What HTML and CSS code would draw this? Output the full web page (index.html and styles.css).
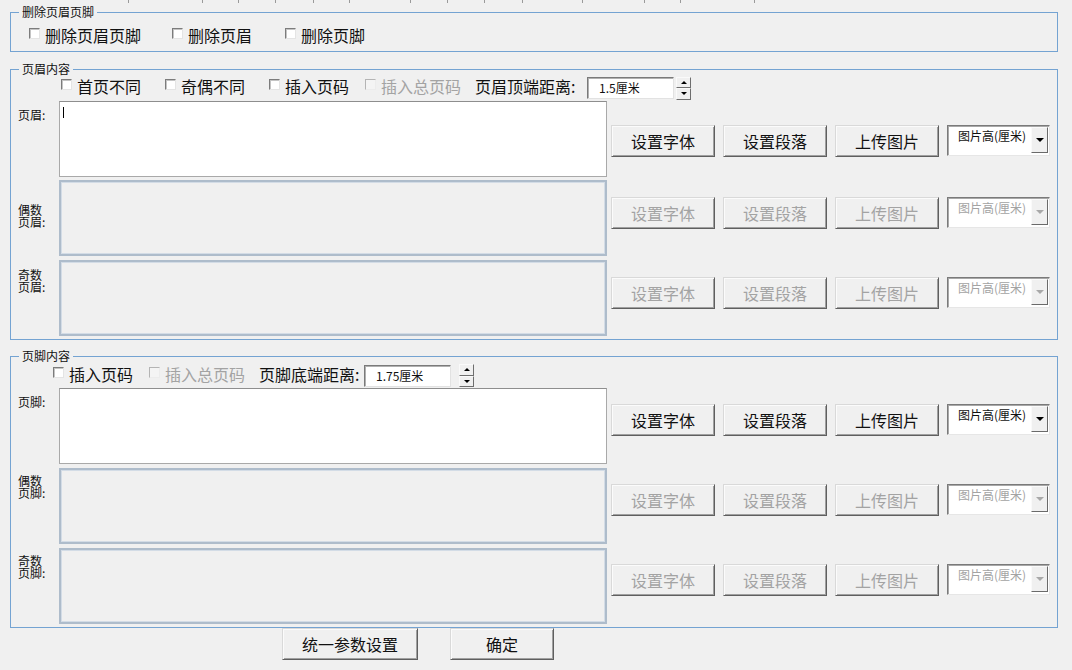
FILE: index.html
```html
<!DOCTYPE html>
<html lang="zh-CN">
<head>
<meta charset="utf-8">
<title>页眉页脚设置</title>
<link rel="stylesheet" href="styles.css">
</head>
<body>
<div class="ticks"><span></span><span></span><span></span><span></span><span></span><span></span><span></span><span></span><span></span><span></span><span></span><span></span><span></span><span></span></div>

<fieldset class="group g-delete">
  <legend>删除页眉页脚</legend>
  <div class="cb-row">
    <label class="cb"><span class="box"></span>删除页眉页脚</label>
    <label class="cb ml31"><span class="box"></span>删除页眉</label>
    <label class="cb ml33"><span class="box"></span>删除页脚</label>
  </div>
</fieldset>

<fieldset class="group g-header">
  <legend>页眉内容</legend>
  <div class="opt-row opt-header">
    <label class="cb"><span class="box"></span>首页不同</label>
    <label class="cb ml24"><span class="box"></span>奇偶不同</label>
    <label class="cb ml24"><span class="box"></span>插入页码</label>
    <label class="cb ml16 disabled"><span class="box"></span>插入总页码</label>
    <span class="dist-label ml14 w112">页眉顶端距离:</span>
    <div class="num-input">1.5厘米</div>
    <div class="spin ml2"><span class="up"></span><span class="down"></span></div>
  </div>

  <div class="editor-row">
    <div class="row-label pt7">页眉:</div>
    <div class="editor"><span class="caret"></span></div>
    <div class="tools pt24">
      <button class="btn">设置字体</button>
      <button class="btn">设置段落</button>
      <button class="btn">上传图片</button>
      <div class="combo"><span class="combo-text">图片高(厘米)</span><span class="combo-btn"></span></div>
    </div>
  </div>
  <div class="editor-row mt3">
    <div class="row-label two pt25">偶数<br>页眉:</div>
    <div class="editor off"></div>
    <div class="tools pt17">
      <button class="btn" disabled>设置字体</button>
      <button class="btn" disabled>设置段落</button>
      <button class="btn" disabled>上传图片</button>
      <div class="combo off"><span class="combo-text">图片高(厘米)</span><span class="combo-btn"></span></div>
    </div>
  </div>
  <div class="editor-row mt4">
    <div class="row-label two pt10">奇数<br>页眉:</div>
    <div class="editor off"></div>
    <div class="tools pt17">
      <button class="btn" disabled>设置字体</button>
      <button class="btn" disabled>设置段落</button>
      <button class="btn" disabled>上传图片</button>
      <div class="combo off"><span class="combo-text">图片高(厘米)</span><span class="combo-btn"></span></div>
    </div>
  </div>
</fieldset>

<fieldset class="group g-footer">
  <legend>页脚内容</legend>
  <div class="opt-row opt-footer">
    <label class="cb"><span class="box"></span>插入页码</label>
    <label class="cb ml16 disabled"><span class="box"></span>插入总页码</label>
    <span class="dist-label ml14 w105">页脚底端距离:</span>
    <div class="num-input">1.75厘米</div>
    <div class="spin ml8"><span class="up"></span><span class="down"></span></div>
  </div>

  <div class="editor-row">
    <div class="row-label pt7">页脚:</div>
    <div class="editor"></div>
    <div class="tools pt16">
      <button class="btn">设置字体</button>
      <button class="btn">设置段落</button>
      <button class="btn">上传图片</button>
      <div class="combo"><span class="combo-text">图片高(厘米)</span><span class="combo-btn"></span></div>
    </div>
  </div>
  <div class="editor-row mt4">
    <div class="row-label two pt8">偶数<br>页脚:</div>
    <div class="editor off"></div>
    <div class="tools pt16">
      <button class="btn" disabled>设置字体</button>
      <button class="btn" disabled>设置段落</button>
      <button class="btn" disabled>上传图片</button>
      <div class="combo off"><span class="combo-text">图片高(厘米)</span><span class="combo-btn"></span></div>
    </div>
  </div>
  <div class="editor-row mt4">
    <div class="row-label two pt8">奇数<br>页脚:</div>
    <div class="editor off"></div>
    <div class="tools pt16">
      <button class="btn" disabled>设置字体</button>
      <button class="btn" disabled>设置段落</button>
      <button class="btn" disabled>上传图片</button>
      <div class="combo off"><span class="combo-text">图片高(厘米)</span><span class="combo-btn"></span></div>
    </div>
  </div>
</fieldset>

<div class="bottom-bar">
  <button class="btn wide">统一参数设置</button>
  <button class="btn">确定</button>
</div>
</body>
</html>
```

FILE: styles.css
```css
* { box-sizing: border-box; }
html, body { margin: 0; padding: 0; }
body {
  width: 1072px;
  height: 670px;
  overflow: hidden;
  background: #f0f0f0;
  color: #111;
  font-family: "Noto Sans CJK SC", "Microsoft YaHei", sans-serif;
}

/* cut-off marks of the content above */
.ticks {
  display: grid;
  grid-template-columns: 74px 36px 37px 38px 36px 61px 37px 37px 38px 60px 62px 36px 74px 1px;
  padding-left: 128px;
  height: 5px;
}
.ticks span { border-left: 1px solid #9a9a9a; height: 3px; }

/* group boxes */
.group {
  margin: 0 0 0 10px;
  width: 1048px;
  min-width: 0;
  padding: 0;
  border: 1px solid #74a3d2;
}
.group legend {
  margin-left: 8px;
  padding: 0 3px;
  font-size: 12px;
  line-height: 14px;
  height: 14px;
}
.g-header { margin-top: 10px; padding-bottom: 3px; }
.g-footer { margin-top: 9px; padding-bottom: 3px; }

/* checkbox rows */
.cb-row {
  display: flex;
  align-items: center;
  height: 18px;
  margin: 7px 0 7px;
  padding-left: 18px;
}
.cb {
  display: flex;
  align-items: center;
  font-size: 16px;
  line-height: 18px;
  white-space: nowrap;
}
.box {
  width: 11px;
  height: 11px;
  margin-right: 5px;
  margin-bottom: 3px;
  background: #fff;
  border: 1px solid;
  border-color: #7c7c7c #e4e4e4 #e4e4e4 #7c7c7c;
  box-shadow: inset 1px 1px 0 #c4c4c4;
}
.cb.disabled { color: #a3a3a3; }
.cb.disabled .box {
  background: #f4f4f4;
  border-color: #b4b4b4 #ececec #ececec #b4b4b4;
  box-shadow: none;
}

.ml2 { margin-left: 2px; }
.ml8 { margin-left: 8px; }
.ml14 { margin-left: 14px; }
.ml16 { margin-left: 16px; }
.ml24 { margin-left: 24px; }
.ml31 { margin-left: 31px; }
.ml33 { margin-left: 33px; }

.opt-row {
  display: flex;
  align-items: center;
  height: 24px;
}
.opt-row .cb,
.opt-row .dist-label { margin-bottom: 5px; }
.opt-header { padding-left: 50px; margin-bottom: 1px; }
.opt-footer { padding-left: 42px; height: 25px; }
.opt-footer .cb,
.opt-footer .dist-label { margin-bottom: 3px; }

.dist-label {
  font-size: 16px;
  line-height: 18px;
  white-space: nowrap;
}
.w112 { width: 112px; }
.w105 { width: 105px; }

.num-input {
  width: 87px;
  height: 22px;
  background: #fff;
  border: 1px solid;
  border-color: #7a7a7a #e2e2e2 #e2e2e2 #7a7a7a;
  box-shadow: inset 1px 1px 0 #b0b0b0;
  font-size: 12px;
  line-height: 19px;
  padding-left: 11px;
  white-space: nowrap;
}

.spin {
  display: flex;
  flex-direction: column;
  width: 15px;
  height: 23px;
}
.spin span {
  flex: 1;
  display: flex;
  align-items: center;
  justify-content: center;
  background: #f0f0f0;
  border: 1px solid;
  border-color: #fafafa #6e6e6e #6e6e6e #fafafa;
}
.spin .up::before {
  content: "";
  border-left: 3px solid transparent;
  border-right: 3px solid transparent;
  border-bottom: 3px solid #000;
}
.spin .down::before {
  content: "";
  border-left: 3px solid transparent;
  border-right: 3px solid transparent;
  border-top: 3px solid #000;
}

/* editor rows */
.editor-row {
  display: flex;
  height: 76px;
}
.mt3 { margin-top: 3px; }
.mt4 { margin-top: 4px; }

.row-label {
  width: 48px;
  padding-left: 7px;
  font-size: 12px;
  line-height: 14px;
  white-space: nowrap;
}
.row-label.two { line-height: 12px; }
.pt7 { padding-top: 7px; }
.pt8 { padding-top: 7px; }
.pt10 { padding-top: 9px; }
.pt25 { padding-top: 24px; }

.editor {
  width: 548px;
  height: 76px;
  background: #fff;
  border: 1px solid #a9a9a9;
  border-top-color: #8e8e8e;
  padding: 5px 0 0 3px;
}
.caret {
  display: block;
  width: 1px;
  height: 11px;
  background: #000;
}
.editor.off {
  background: #f0f0f0;
  border: 2px solid #aebccb;
  box-shadow: inset 0 0 0 1px #d3dce6;
}

.tools {
  display: flex;
  align-items: flex-start;
  gap: 8px;
  margin-left: 4px;
}
.pt16 { padding-top: 16px; }
.pt17 { padding-top: 17px; }
.pt24 { padding-top: 24px; }

.btn {
  width: 104px;
  height: 32px;
  padding: 0;
  margin: 0;
  background: #f0f0f0;
  border: 1px solid;
  border-color: #d9d9d9 #5f5f5f #5f5f5f #d9d9d9;
  box-shadow: inset 1px 1px 0 #fbfbfb, inset -1px -1px 0 #a0a0a0;
  font-family: "Noto Sans CJK SC", "Microsoft YaHei", sans-serif;
  font-size: 16px;
  line-height: 28px;
  color: #111;
}
.btn:disabled { color: #a3a3a3; }
.btn.wide { width: 136px; }

.combo {
  display: flex;
  width: 103px;
  height: 31px;
  background: #fff;
  border: 1px solid;
  border-color: #7a7a7a #e6e6e6 #e6e6e6 #7a7a7a;
  box-shadow: inset 1px 1px 0 #a8a8a8;
  padding: 1px 1px 2px 0;
}
.combo-text {
  flex: 1;
  font-size: 12px;
  line-height: 14px;
  padding: 2px 0 0 10px;
  white-space: nowrap;
  overflow: hidden;
}
.combo-btn {
  width: 17px;
  display: flex;
  align-items: center;
  justify-content: center;
  background: #f0f0f0;
  border: 1px solid;
  border-color: #fafafa #6a6a6a #6a6a6a #fafafa;
}
.combo-btn::before {
  content: "";
  border-left: 4px solid transparent;
  border-right: 4px solid transparent;
  border-top: 4px solid #000;
}
.combo.off .combo-text { color: #a3a3a3; }
.combo.off .combo-btn::before { border-top-color: #a8a8a8; }

.bottom-bar {
  display: flex;
  gap: 32px;
  padding-left: 282px;
}
```
